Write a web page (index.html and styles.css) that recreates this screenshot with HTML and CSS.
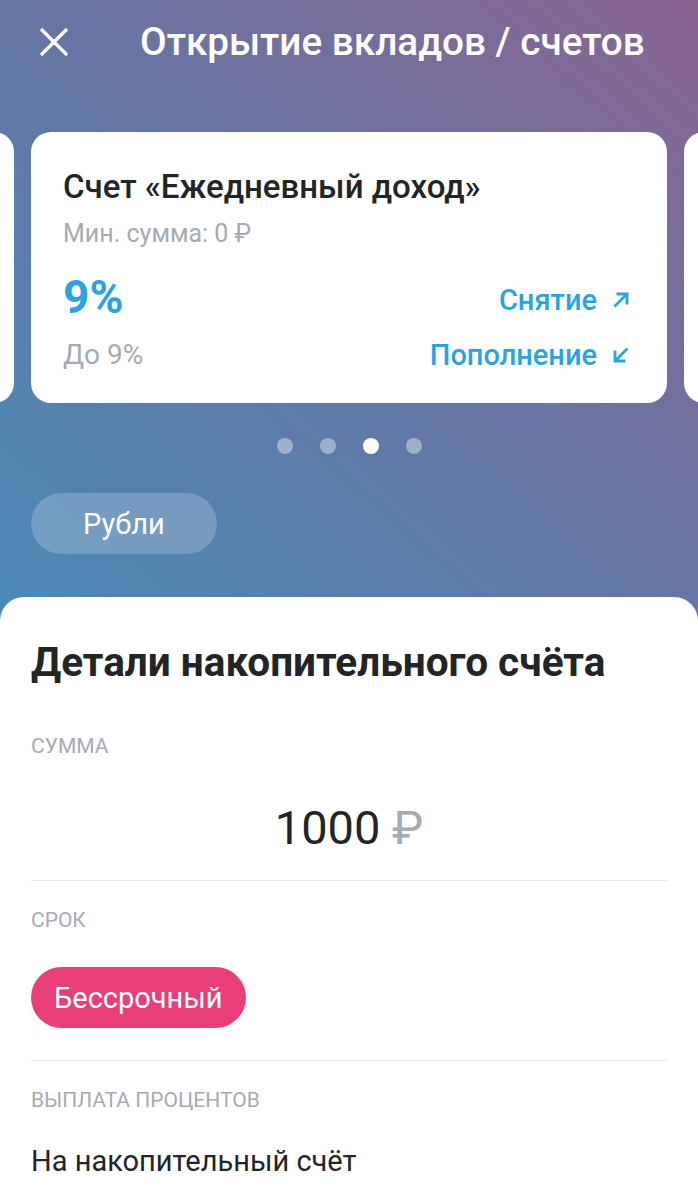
FILE: index.html
```html
<!DOCTYPE html>
<html lang="ru">
<head>
    <meta charset="UTF-8">
    <meta name="viewport" content="width=device-width, initial-scale=1.0">
    <title>Открытие вкладов / счетов</title>
    <link rel="stylesheet" href="styles.css">
</head>
<body>
    <div class="screen">
        <header class="topbar">
            <button class="close" aria-label="Закрыть">
                <svg width="30" height="30" viewBox="0 0 30 30"><path d="M2 2 L28 28 M28 2 L2 28" stroke="#fff" stroke-width="3.2" fill="none"/></svg>
            </button>
            <h1 class="title">Открытие вкладов / счетов</h1>
        </header>

        <div class="carousel">
            <div class="peek"></div>
            <div class="card">
                <div class="card-name">Счет «Ежедневный доход»</div>
                <div class="card-min">Мин. сумма: 0 ₽</div>
                <div class="card-row">
                    <div class="rate">
                        <div class="rate-value">9%</div>
                        <div class="rate-max">До 9%</div>
                    </div>
                    <div class="ops">
                        <div class="op">Снятие
                            <svg width="18" height="18" viewBox="0 0 18 18"><path d="M2.5 15.5 L15 3 M4.5 3 H15 V13.5" stroke="#2ba3e0" stroke-width="2.8" fill="none"/></svg>
                        </div>
                        <div class="op">Пополнение
                            <svg width="18" height="18" viewBox="0 0 18 18"><path d="M15.5 2.5 L3 15 M3 4.5 V15 H13.5" stroke="#2ba3e0" stroke-width="2.8" fill="none"/></svg>
                        </div>
                    </div>
                </div>
            </div>
            <div class="peek"></div>
        </div>

        <div class="dots">
            <span class="dot"></span>
            <span class="dot"></span>
            <span class="dot active"></span>
            <span class="dot"></span>
        </div>

        <div class="currency">
            <span class="chip chip-light">Рубли</span>
        </div>

        <main class="sheet">
            <h2 class="sheet-title">Детали накопительного счёта</h2>

            <section class="field field-sum">
                <div class="label">СУММА</div>
                <div class="amount">1000 <span class="rub">₽</span></div>
            </section>

            <section class="field">
                <div class="label">СРОК</div>
                <span class="chip chip-pink">Бессрочный</span>
            </section>

            <section class="field last">
                <div class="label">ВЫПЛАТА ПРОЦЕНТОВ</div>
                <div class="value">На накопительный счёт</div>
            </section>
        </main>
    </div>
</body>
</html>
```

FILE: styles.css
```css
* { box-sizing: border-box; }
body { margin: 0; font-family: Roboto, "Noto Sans", sans-serif; }
.screen { width: 698px; height: 1200px; overflow: hidden; display: flex; flex-direction: column;
    background: linear-gradient(to top right, #4a8ab7 0%, #6278a6 45%, #8a6491 100%) no-repeat;
    background-size: 698px 620px; }

.topbar { display: flex; align-items: center; height: 84px; padding: 0 0 0 38px; }
.close { background: none; border: none; padding: 0; width: 32px; height: 32px; display: flex; align-items: center; justify-content: center; }
.title { margin: 0 0 0 70px; color: #fff; font-size: 38.7px; font-weight: 500; line-height: 46px; }

.carousel { display: flex; gap: 17px; margin-top: 48px; margin-left: -620px; }
.peek { width: 634px; height: 271px; background: #fff; border-radius: 20px; flex: none; }
.card { width: 636px; height: 271px; background: #fff; border-radius: 20px; flex: none; padding: 35px 37px 0 32px; }
.card-name { font-size: 33px; line-height: 40px; font-weight: 500; color: #222426; }
.card-min { margin-top: 12px; font-size: 25px; line-height: 30px; color: #a4abb2; }
.card-row { display: flex; justify-content: space-between; margin-top: 21px; }
.rate-value { font-size: 46px; line-height: 54px; font-weight: 700; color: #2ba3e0; }
.rate-max { margin-top: 14px; font-size: 28px; line-height: 34px; color: #a4abb2; }
.ops { display: flex; flex-direction: column; align-items: flex-end; gap: 21px; padding-top: 13px; }
.op { display: flex; align-items: center; gap: 15px; font-size: 29px; line-height: 34px; font-weight: 500; color: #2ba3e0; }

.dots { display: flex; justify-content: center; gap: 27px; margin-top: 35px; }
.dot { width: 16px; height: 16px; border-radius: 50%; background: rgba(255,255,255,0.4); }
.dot.active { background: #fff; }

.currency { padding: 39px 31px 0; }
.chip { display: inline-flex; align-items: center; height: 61px; border-radius: 31px; font-size: 29px; color: #fff; }
.chip-light { background: rgba(255,255,255,0.2); padding: 0 52px; }
.chip-pink { background: #e83e7a; padding: 0 23px; }

.sheet { flex: 1; margin-top: 43px; background: #fff; border-radius: 24px 24px 0 0; padding: 41px 31px 0; }
.sheet-title { margin: 0; font-size: 40.5px; line-height: 48px; font-weight: 700; color: #222426; }
.field { border-bottom: 1px solid #e5e7ea; }
.field.last { border-bottom: none; }
.label { font-size: 21px; line-height: 26px; color: #a4abb2; padding-top: 26px; }
.field-sum { margin-top: 47px; }
.field-sum .label { padding-top: 0; }
.amount { text-align: center; font-size: 47px; line-height: 56px; color: #222426; padding: 41px 0 24px; }
.rub { color: #a4abb2; }
.field .chip-pink { margin: 34px 0 32px; }
.value { font-size: 29px; line-height: 34px; color: #222426; margin-top: 31px; }
```
